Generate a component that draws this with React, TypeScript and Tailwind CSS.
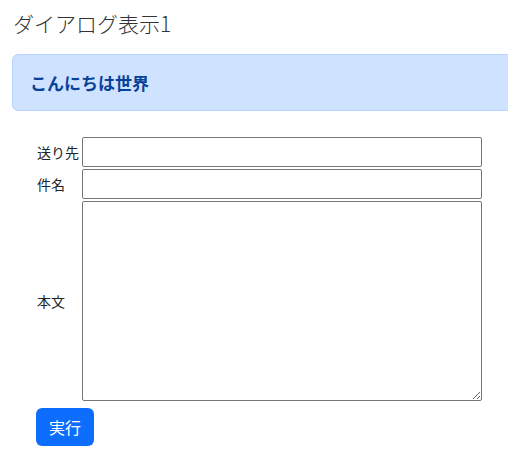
export default function App() {
  return (
    <div
      className="w-[508px] h-[469px] overflow-hidden bg-white pt-2 pl-3 text-[#212529]"
      style={{ fontFamily: '"Noto Sans CJK JP", "Noto Sans", sans-serif' }}
    >
      <h1 className="text-[21px] leading-[30px] font-light text-[#333] pl-[1px]">ダイアログ表示1</h1>

      <div className="mt-4 w-[520px] h-[57px] rounded-md border border-[#b6d4fe] bg-[#cfe2ff] flex items-center px-[17px]">
        <span className="text-[17px] font-bold text-[#084298]">こんにちは世界</span>
      </div>

      <form className="ml-6 mt-[26px]" onSubmit={(e) => e.preventDefault()}>
        <div className="grid grid-cols-[46px_400px] gap-y-[2px]">
          <label className="flex items-center text-[14px] pl-[1px]">送り先</label>
          <input className="h-[30px] border border-[#767676] rounded-[2px] px-1 text-sm" />
          <label className="flex items-center text-[14px] pl-[1px]">件名</label>
          <input className="h-[30px] border border-[#767676] rounded-[2px] px-1 text-sm" />
          <label className="flex items-center text-[14px] pl-[1px]">本文</label>
          <textarea className="h-[200px] border border-[#767676] rounded-[2px] px-1 text-sm" />
        </div>
        <button
          type="submit"
          className="mt-[7px] w-[58px] h-[38px] rounded-md bg-[#0d6efd] text-white text-[16px]"
        >
          実行
        </button>
      </form>
    </div>
  );
}
